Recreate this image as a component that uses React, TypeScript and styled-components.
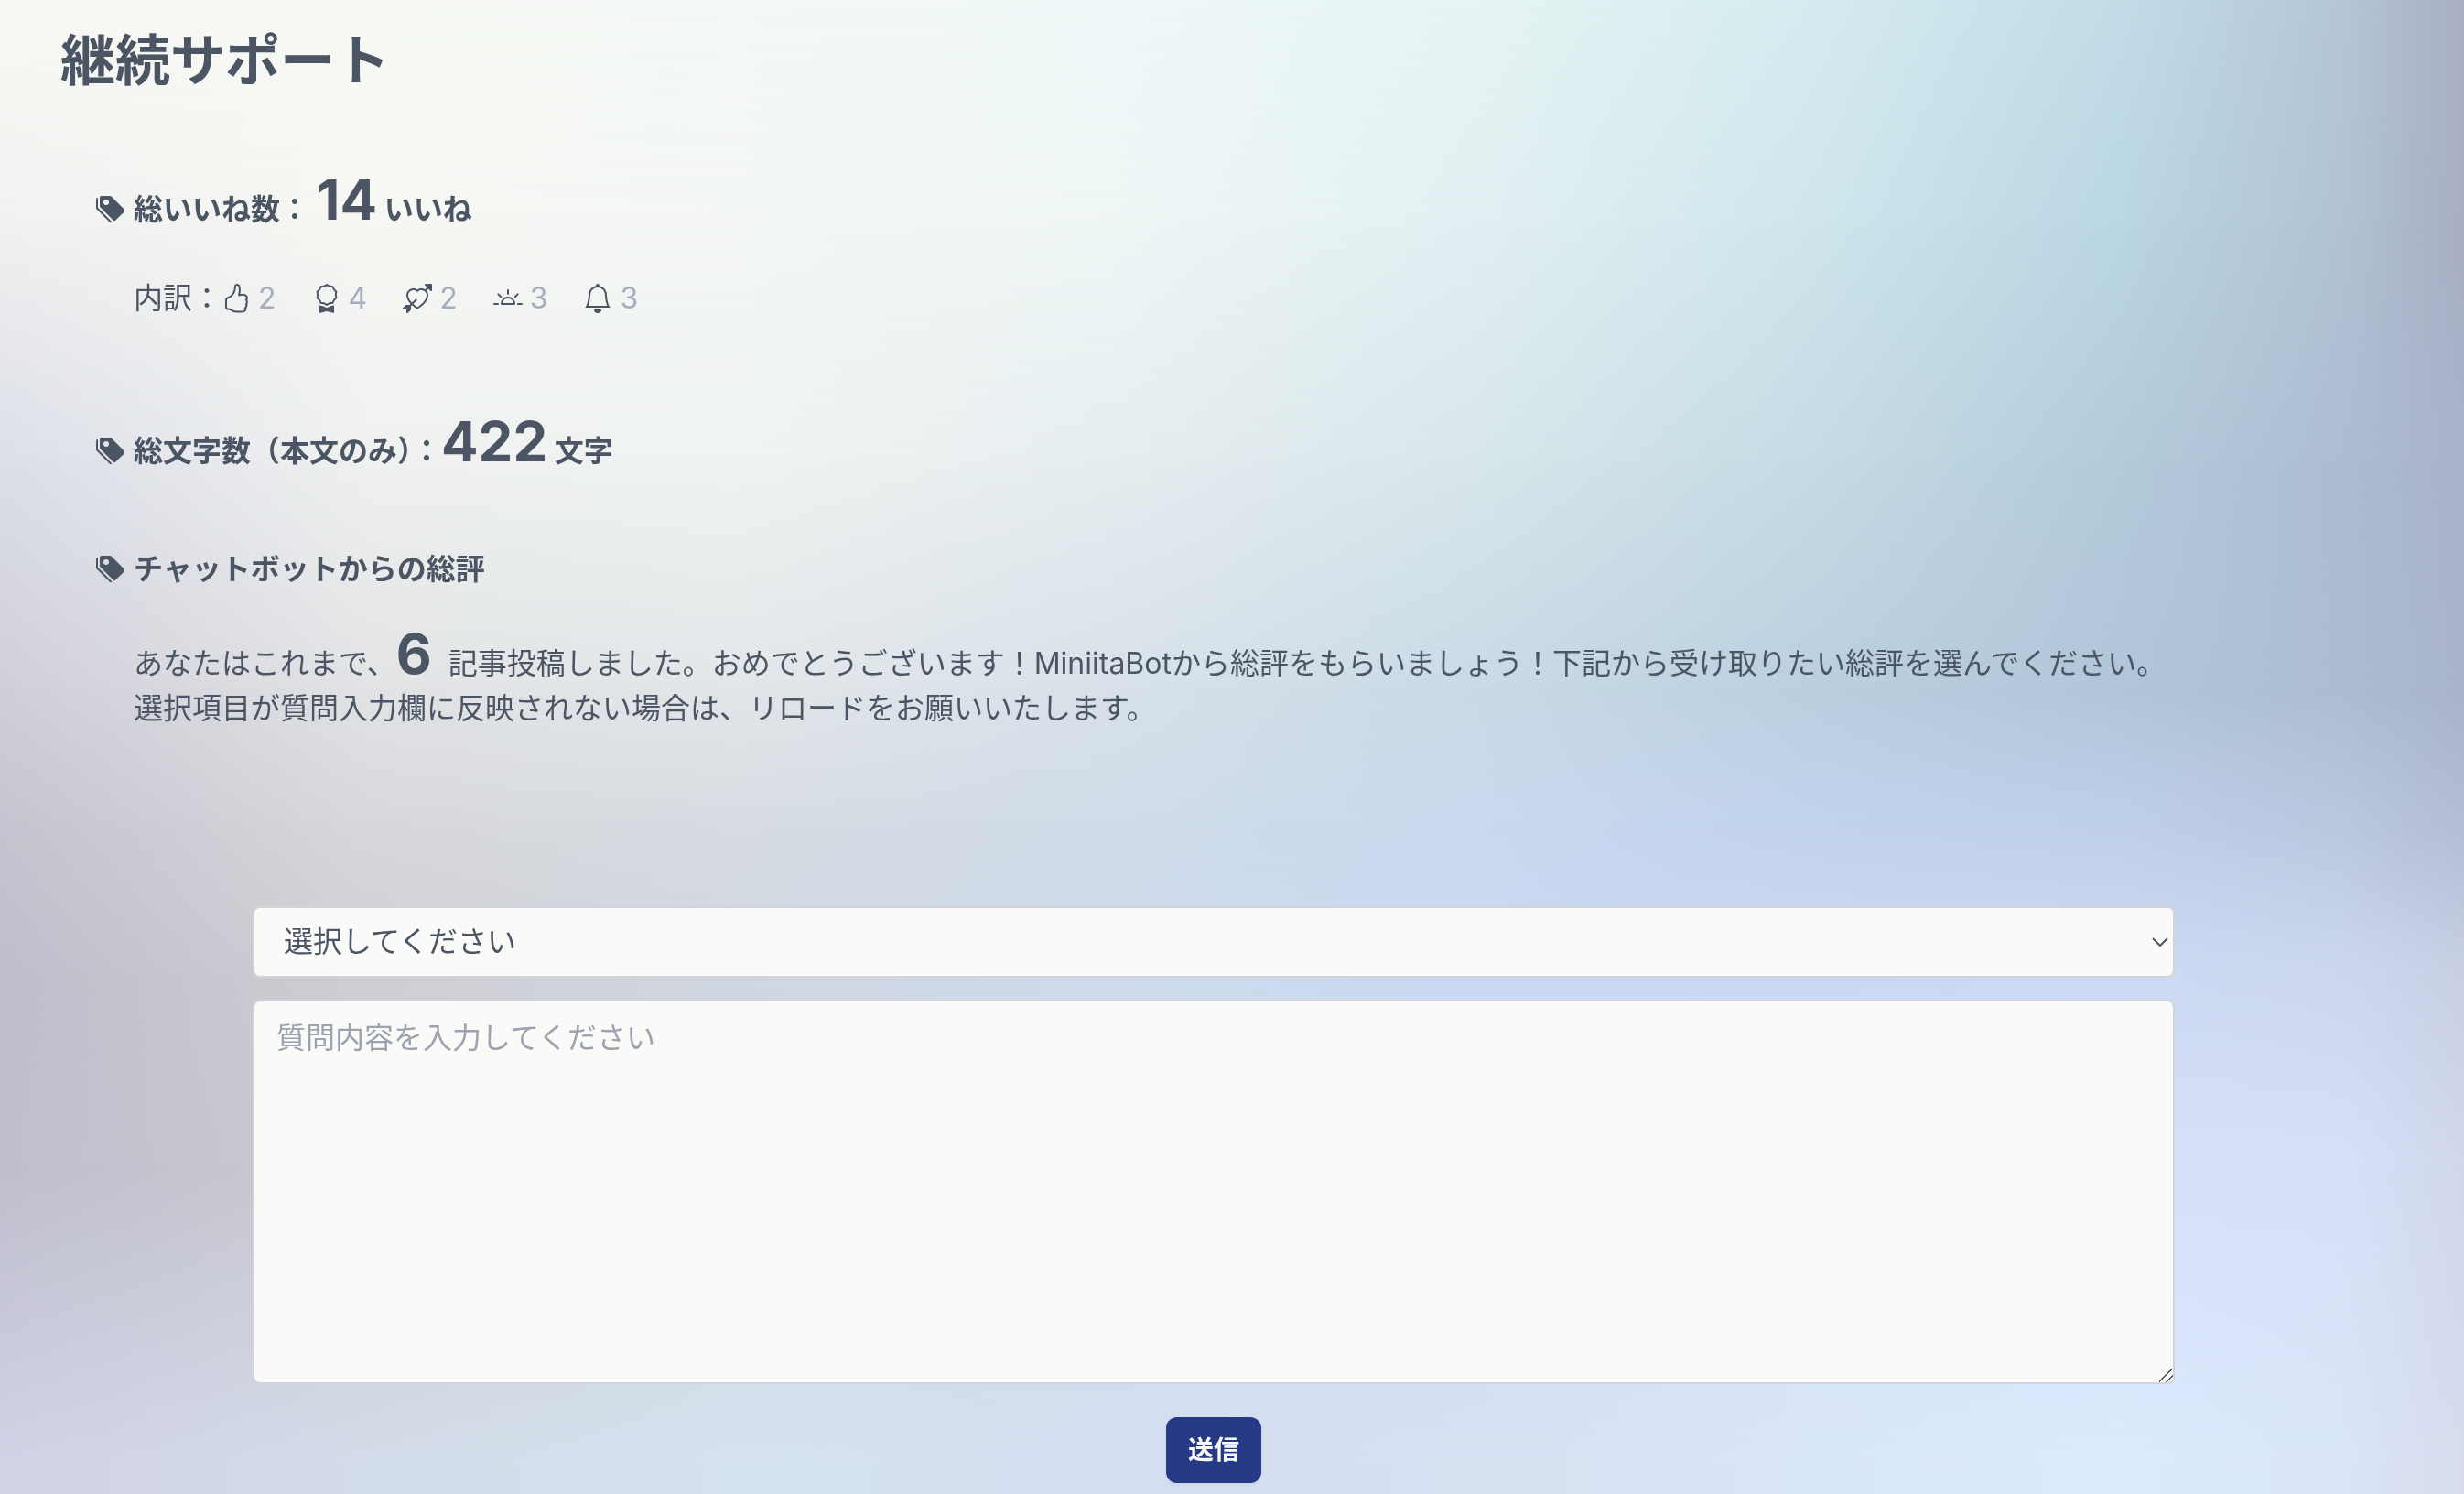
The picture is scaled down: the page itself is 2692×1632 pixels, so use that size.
import React from "react";
import styled, { createGlobalStyle } from "styled-components";
import {
  BsTagsFill,
  BsHandThumbsUp,
  BsAward,
  BsArrowThroughHeart,
  BsBrightnessAltHigh,
  BsBell,
} from "react-icons/bs";

const GlobalStyle = createGlobalStyle`
  *, *::before, *::after { box-sizing: border-box; }
  body {
    margin: 0;
    color: #4b5563;
    font-family: Inter, "Noto Sans CJK JP", sans-serif;
    font-size: 32px;
    line-height: 48px;
  }
  h1, h2, p { margin: 0; }
`;

/* Colour mesh: each band is a horizontal blend that fades in below the previous one. */
const stops = [0, 15, 30, 45, 60, 73, 86, 95, 100];
const bands = [
  { from: 0, to: 0, colors: ["#f8f9f4", "#f7f9f4", "#f4f8f6", "#eff8f8", "#e6f4f3", "#d6ecf0", "#c2dde8", "#b5c6d5", "#a9afc4"] },
  { from: 0, to: 15, colors: ["#f0f1f0", "#f6f7f3", "#f3f6f4", "#eef6f5", "#e2eff2", "#cfe6ec", "#bad6e3", "#b1c2d4", "#a8aec4"] },
  { from: 15, to: 31, colors: ["#dcdee8", "#eff1f0", "#eff3f0", "#e6edf0", "#d7e6ea", "#c6dbe5", "#b3cbdb", "#adbcd1", "#a9b3c9"] },
  { from: 31, to: 46, colors: ["#cfcfd9", "#e2e3e5", "#e2e6e9", "#d8e1e9", "#c9dae6", "#bccfdf", "#b1c5d9", "#acbcd1", "#a9b4cb"] },
  { from: 46, to: 55, colors: ["#c6c4d0", "#d8d8dc", "#d7dce2", "#d0dce9", "#c9d9ee", "#c2d2ed", "#bfcfe9", "#b9c7df", "#b3bdd3"] },
  { from: 55, to: 65, colors: ["#c0bdcb", "#d0cfd3", "#d1d7e1", "#cedbec", "#cad9f3", "#cbd8f5", "#cddaf3", "#ccd7ef", "#c8cfe4"] },
  { from: 65, to: 78, colors: ["#bfbecd", "#cccad0", "#d0d6df", "#d2dbe9", "#d2ddf2", "#d5dff5", "#d6e0fa", "#d6e0f8", "#d1d8ec"] },
  { from: 78, to: 98, colors: ["#d1d2e6", "#d3dce9", "#d4e2ee", "#d3def0", "#d6e0f1", "#d9e6f7", "#dceafd", "#d9e5f7", "#d7dbed"] },
];

const Backdrop = styled.div`
  position: fixed;
  inset: 0;
  z-index: -1;
  display: grid;
`;

const Band = styled.div<{ $from: number; $to: number; $colors: string[] }>`
  grid-area: 1 / 1;
  background: linear-gradient(
    to right,
    ${(p) => p.$colors.map((c, i) => `${c} ${stops[i]}%`).join(", ")}
  );
  mask-image: ${(p) =>
    p.$to === 0 ? "none" : `linear-gradient(to bottom, transparent ${p.$from}%, #000 ${p.$to}%)`};
`;

const Page = styled.main`
  padding: 30px 106px 12px 66px;
`;

const Title = styled.h1`
  font-size: 60px;
  line-height: 72px;
  font-weight: 700;
`;

const Section = styled.section<{ $gap: number }>`
  margin-top: ${(p) => p.$gap}px;
  padding-left: 38px;
`;

const Heading = styled.h2`
  font-size: 32px;
  line-height: 48px;
  font-weight: 700;

  svg {
    width: 34px;
    height: 32px;
    margin-right: 8px;
    vertical-align: -4px;
  }
`;

const Figure = styled.span`
  font-size: 60px;
  line-height: 72px;
  font-weight: 700;
`;

const Body = styled.div<{ $gap: number }>`
  margin-top: ${(p) => p.$gap}px;
  padding-left: 42px;
`;

const Breakdown = styled.div`
  display: flex;
  align-items: center;
`;

const Reactions = styled.ul`
  display: flex;
  gap: 39px;
  margin: 0;
  padding: 0;
  list-style: none;
`;

const Reaction = styled.li`
  display: flex;
  align-items: center;
  gap: 8px;
  color: #a6adbd;

  svg {
    width: 32px;
    height: 32px;
    color: #4b5563;
  }
`;

const Form = styled.form`
  display: flex;
  flex-direction: column;
  align-items: center;
  width: calc(100% * 5 / 6);
  margin: 192px auto 0;
`;

const SelectBox = styled.div`
  position: relative;
  width: 100%;

  svg {
    position: absolute;
    right: 6px;
    top: 50%;
    margin-top: -10px;
    width: 20px;
    height: 20px;
    pointer-events: none;
  }
`;

const Select = styled.select`
  display: block;
  appearance: none;
  width: 100%;
  height: 78px;
  padding: 0 32px;
  border: 2px solid #d1d5db;
  border-radius: 8px;
  background: #fafaf9;
  color: inherit;
  font: inherit;
`;

const Question = styled.textarea`
  display: block;
  width: 100%;
  height: 420px;
  margin-top: 24px;
  padding: 16px 24px;
  border: 2px solid #d1d5db;
  border-radius: 8px;
  background: #fafaf9;
  color: inherit;
  font: inherit;
  resize: vertical;

  &::placeholder {
    color: #9ca3af;
    opacity: 1;
  }

  &::-webkit-resizer {
    background: linear-gradient(
      135deg,
      transparent 43%,
      #55585c 45% 51%,
      transparent 53% 70%,
      #55585c 72% 78%,
      transparent 80%
    );
  }
`;

const Submit = styled.button`
  margin-top: 36px;
  padding: 16px 24px;
  border: 0;
  border-radius: 12px;
  background: #253985;
  color: #fafaf9;
  font: inherit;
  font-size: 28px;
  line-height: 40px;
  font-weight: 700;
  box-shadow: 0 2px 4px rgba(0, 0, 0, 0.05);
`;

const reactions = [
  { name: "いいね", Icon: BsHandThumbsUp, count: 2 },
  { name: "すごい", Icon: BsAward, count: 4 },
  { name: "好き", Icon: BsArrowThroughHeart, count: 2 },
  { name: "ひらめき", Icon: BsBrightnessAltHigh, count: 3 },
  { name: "注目", Icon: BsBell, count: 3 },
];

export default function App() {
  return (
    <>
      <GlobalStyle />
      <Backdrop>
        {bands.map((b) => (
          <Band key={b.to} $from={b.from} $to={b.to} $colors={b.colors} />
        ))}
      </Backdrop>
      <Page>
        <Title>継続サポート</Title>

        <Section $gap={80}>
          <Heading>
            <BsTagsFill />
            総いいね数： <Figure>14</Figure> いいね
          </Heading>
          <Body $gap={48}>
            <Breakdown>
              <span>内訳：</span>
              <Reactions>
                {reactions.map(({ name, Icon, count }) => (
                  <Reaction key={name}>
                    <Icon />
                    <span>{count}</span>
                  </Reaction>
                ))}
              </Reactions>
            </Breakdown>
          </Body>
        </Section>

        <Section $gap={96}>
          <Heading>
            <BsTagsFill />
            総文字数（本文のみ）：<Figure>422</Figure> 文字
          </Heading>
        </Section>

        <Section $gap={80}>
          <Heading>
            <BsTagsFill />
            チャットボットからの総評
          </Heading>
          <Body $gap={32}>
            <p>
              あなたはこれまで、<Figure>6</Figure>&nbsp; 記事投稿しました。おめでとうございます！MiniitaBotから総評をもらいましょう！下記から受け取りたい総評を選んでください。
              <br />
              選択項目が質問入力欄に反映されない場合は、リロードをお願いいたします。
            </p>
          </Body>
        </Section>

        <Form onSubmit={(e) => e.preventDefault()}>
          <SelectBox>
            <Select aria-label="総評の種類" defaultValue="">
              <option value="">選択してください</option>
            </Select>
            <svg viewBox="0 0 20 20" fill="none" stroke="#4b5563" strokeWidth="2" aria-hidden="true">
              <path d="M2 6l8 8 8-8" />
            </svg>
          </SelectBox>
          <Question aria-label="質問内容" placeholder="質問内容を入力してください" />
          <Submit type="submit">送信</Submit>
        </Form>
      </Page>
    </>
  );
}
